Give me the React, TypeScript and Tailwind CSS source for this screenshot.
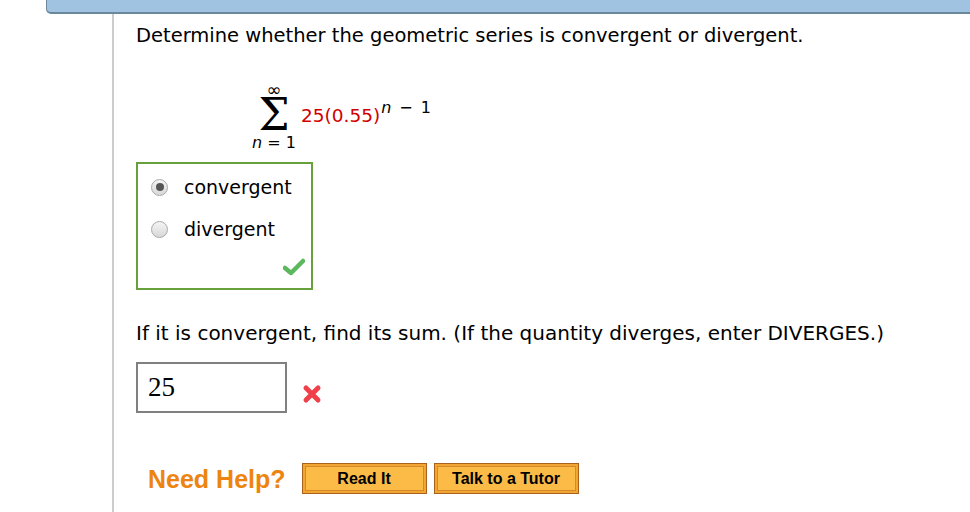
import React from "react";

const V = { fontFamily: '"DejaVu Sans", Verdana, sans-serif' };
const A = { fontFamily: '"Liberation Sans", Arial, sans-serif' };

function Radio({ checked }: { checked?: boolean }) {
  return (
    <span className="relative inline-flex h-[17px] w-[17px] items-center justify-center rounded-full border border-[#a9a9a9] bg-gradient-to-b from-[#f4f4f4] to-[#d8d8d8]">
      {checked && <span className="h-[8px] w-[8px] rounded-full bg-[#555]" />}
    </span>
  );
}

function Btn({ label, w }: { label: string; w: string }) {
  return (
    <div className={`flex h-[31px] ${w} border border-[#a8621c] bg-[#f3a531] p-[2px]`}>
      <div className="flex flex-1 items-center justify-center border border-[#d48a2c] bg-[#fcbb47] text-[16px] font-bold text-black" style={A}>
        {label}
      </div>
    </div>
  );
}

export default function App() {
  return (
    <div className="relative h-[512px] w-[970px] overflow-hidden bg-white text-black" style={V}>
      {/* top bar */}
      <div className="ml-[46px] h-[14px] rounded-bl-[5px] border-b-2 border-l border-[#6b879c] bg-[#9fc3e0]" />
      <div className="flex">
        <div className="ml-[112px] h-[498px] w-[2px] bg-[#cccccc]" />
        <div className="pl-[22px] pt-[10px]">
          <div className="whitespace-nowrap text-[19.5px] leading-[24px]">Determine whether the geometric series is convergent or divergent.</div>

          {/* series */}
          <div className="ml-[113px] mt-[36px] flex items-start">
            <div className="flex w-[50px] flex-col items-center">
              <div className="h-[13px] text-[18px] leading-[12px]">∞</div>
              <div className="h-[36px] text-[44px] leading-[36px]" style={{ fontFamily: '"DejaVu Serif", serif' }}>Σ</div>
              <div className="mt-[2px] h-[16px] whitespace-nowrap text-[16px] leading-[16px]"><i>n</i> = 1</div>
            </div>
            <div className="ml-[2px] mt-[20px] flex items-start whitespace-nowrap">
              <span className="text-[18.5px] leading-[24px] text-[#d10000]">25(0.55)</span>
              <span className="-mt-[4px] ml-[1px] flex text-[16px] leading-[16px]">
                <i>n</i>
                <span className="ml-[8px]">−</span>
                <span className="ml-[8px]">1</span>
              </span>
            </div>
          </div>

          {/* choices */}
          <div className="relative mt-[11px] h-[128px] w-[177px] border-2 border-[#66a13b]">
            <div className="flex items-center pl-[13px] pt-[11px]">
              <Radio checked />
              <span className="ml-[16px] text-[19px] leading-[24px]">convergent</span>
            </div>
            <div className="flex items-center pl-[13px] pt-[18px]">
              <Radio />
              <span className="ml-[16px] text-[19px] leading-[24px]">divergent</span>
            </div>
            <svg className="absolute bottom-[12px] right-[6px]" width="22" height="18" viewBox="0 0 22 18">
              <path d="M2 10 L8 15 L20 3" fill="none" stroke="#5cb85c" strokeWidth="4.5" strokeLinecap="round" strokeLinejoin="round" />
            </svg>
          </div>

          <div className="mt-[31px] whitespace-nowrap text-[20px] leading-[24px]">If it is convergent, find its sum. (If the quantity diverges, enter DIVERGES.)</div>

          <div className="mt-[17px] flex items-center">
            <div className="flex h-[51px] w-[151px] items-center border-2 border-[#808080] pl-[10px] font-['Liberation_Serif',serif] text-[27px]" style={{ fontFamily: '"Liberation Serif", "DejaVu Serif", serif' }}>
              25
            </div>
            <svg className="ml-[15px] mt-[12px]" width="20" height="20" viewBox="0 0 20 20">
              <path d="M4 4 L16 16 M16 4 L4 16" stroke="#f0414b" strokeWidth="5" strokeLinecap="round" />
            </svg>
          </div>

          <div className="mt-[50px] flex items-center pl-[12px]">
            <span className="text-[25px] font-bold leading-[30px] text-[#ee8410]" style={A}>Need Help?</span>
            <div className="ml-[16px] flex gap-[7px]">
              <Btn label="Read It" w="w-[125px]" />
              <Btn label="Talk to a Tutor" w="w-[145px]" />
            </div>
          </div>
        </div>
      </div>
    </div>
  );
}
